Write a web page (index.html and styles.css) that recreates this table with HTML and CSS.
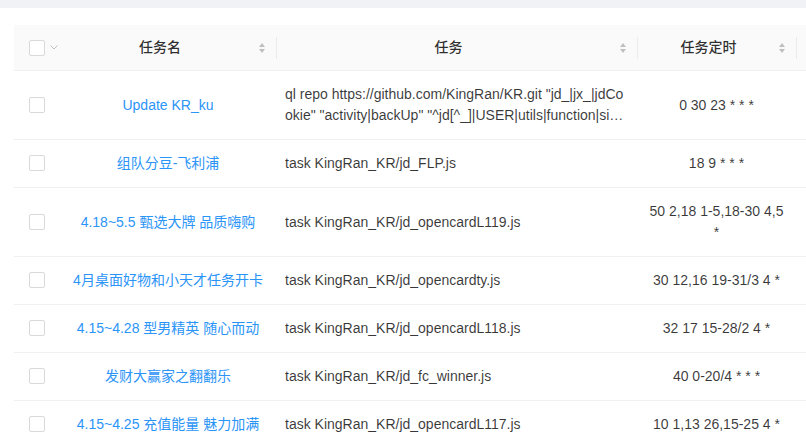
FILE: index.html
```html
<!DOCTYPE html>
<html lang="zh-CN">
<head>
<meta charset="utf-8">
<title>定时任务</title>
<link rel="stylesheet" href="styles.css">
</head>
<body>
<div class="topband"></div>
<div class="card">
  <table class="tbl">
    <colgroup>
      <col class="c-sel">
      <col class="c-name">
      <col class="c-cmd">
      <col class="c-sched">
      <col class="c-extra">
    </colgroup>
    <thead>
      <tr>
        <th class="sel">
          <div class="sel-head">
            <span class="cb"></span>
            <svg class="chev" width="8" height="5" viewBox="0 0 8 5"><path d="M0.5 0.5 L4 4 L7.5 0.5" fill="none" stroke="#bfbfbf" stroke-width="1"/></svg>
          </div>
        </th>
        <th><div class="th-in"><span class="th-title">任务名</span><span class="sorter"><i class="up"></i><i class="down"></i></span></div></th>
        <th><div class="th-in"><span class="th-title">任务</span><span class="sorter"><i class="up"></i><i class="down"></i></span></div></th>
        <th><div class="th-in"><span class="th-title">任务定时</span><span class="sorter"><i class="up"></i><i class="down"></i></span></div></th>
        <th><div class="th-in"><span class="th-title"></span></div></th>
      </tr>
    </thead>
    <tbody>
      <tr>
        <td class="sel"><span class="cb"></span></td>
        <td class="name"><a>Update KR_ku</a></td>
        <td class="cmd"><div class="clamp">ql repo https://github.com/KingRan/KR.git "jd_|jx_|jdCookie" "activity|backUp" "^jd[^_]|USER|utils|function|sign|sendNotify|ql|JDJR" "" "^jd[^_]|USER|utils|function|sign|sendNotify|ql|JDJR"</div></td>
        <td class="sched">0 30 23 * * *</td>
        <td class="extra"></td>
      </tr>
      <tr>
        <td class="sel"><span class="cb"></span></td>
        <td class="name"><a>组队分豆-飞利浦</a></td>
        <td class="cmd">task KingRan_KR/jd_FLP.js</td>
        <td class="sched">18 9 * * *</td>
        <td class="extra"></td>
      </tr>
      <tr>
        <td class="sel"><span class="cb"></span></td>
        <td class="name"><a>4.18~5.5 甄选大牌 品质嗨购</a></td>
        <td class="cmd">task KingRan_KR/jd_opencardL119.js</td>
        <td class="sched">50 2,18 1-5,18-30 4,5 *</td>
        <td class="extra"></td>
      </tr>
      <tr>
        <td class="sel"><span class="cb"></span></td>
        <td class="name"><a>4月桌面好物和小天才任务开卡</a></td>
        <td class="cmd">task KingRan_KR/jd_opencardty.js</td>
        <td class="sched">30 12,16 19-31/3 4 *</td>
        <td class="extra"></td>
      </tr>
      <tr>
        <td class="sel"><span class="cb"></span></td>
        <td class="name"><a>4.15~4.28 型男精英 随心而动</a></td>
        <td class="cmd">task KingRan_KR/jd_opencardL118.js</td>
        <td class="sched">32 17 15-28/2 4 *</td>
        <td class="extra"></td>
      </tr>
      <tr>
        <td class="sel"><span class="cb"></span></td>
        <td class="name"><a>发财大赢家之翻翻乐</a></td>
        <td class="cmd">task KingRan_KR/jd_fc_winner.js</td>
        <td class="sched">40 0-20/4 * * *</td>
        <td class="extra"></td>
      </tr>
      <tr>
        <td class="sel"><span class="cb"></span></td>
        <td class="name"><a>4.15~4.25 充值能量 魅力加满</a></td>
        <td class="cmd">task KingRan_KR/jd_opencardL117.js</td>
        <td class="sched">10 1,13 26,15-25 4 *</td>
        <td class="extra"></td>
      </tr>
    </tbody>
  </table>
</div>
</body>
</html>
```
FILE: styles.css
```css
html, body {
  margin: 0;
  padding: 0;
  background: #fff;
  overflow: hidden;
  width: 806px;
  height: 445px;
}
body {
  font-family: "Liberation Sans", "Noto Sans CJK SC", sans-serif;
  font-size: 14px;
  color: rgba(0, 0, 0, 0.78);
}
.topband {
  height: 8px;
  background: #f0f2f5;
}
.card {
  background: #fff;
  padding: 17px 0 0 14px;
}
.tbl {
  border-collapse: collapse;
  table-layout: fixed;
  width: 932px;
}
.c-sel { width: 46px; }
.c-name { width: 216px; }
.c-cmd { width: 361px; }
.c-sched { width: 159px; }
.c-extra { width: 150px; }

.tbl th {
  background: #fafafa;
  font-weight: 500;
  line-height: 21px;
  padding: 12px 8px;
  border-bottom: 1px solid #f0f0f0;
  position: relative;
  text-align: center;
  color: rgba(0, 0, 0, 0.82);
}
.tbl th + th::before {
  content: "";
  position: absolute;
  left: 0;
  top: 50%;
  width: 1px;
  height: 22px;
  transform: translateY(-50%);
  background: rgba(0, 0, 0, 0.06);
}
.tbl th.sel + th::before { display: none; }
.th-in {
  display: flex;
  align-items: center;
  min-height: 21px;
}
.th-title {
  flex: 1;
  text-align: center;
}
.sorter {
  width: 12px;
  margin-left: 4px;
  display: flex;
  flex-direction: column;
  align-items: center;
  gap: 2px;
}
.sorter i {
  display: block;
  width: 0;
  height: 0;
  border-left: 3.5px solid transparent;
  border-right: 3.5px solid transparent;
}
.sorter .up { border-bottom: 4px solid #bfbfbf; }
.sorter .down { border-top: 4px solid #bfbfbf; }

.tbl th.sel { padding: 12px 0; }
.sel-head {
  display: flex;
  align-items: center;
  padding-left: 15px;
  height: 21px;
  white-space: nowrap;
}
.chev {
  margin-left: 5px;
  display: block;
}
.cb {
  display: inline-block;
  box-sizing: border-box;
  width: 16px;
  height: 16px;
  border: 1px solid #d9d9d9;
  border-radius: 2px;
  background: #fff;
  vertical-align: middle;
}

.tbl td {
  line-height: 21px;
  padding: 13px 8px;
  border-bottom: 1px solid #f0f0f0;
  vertical-align: middle;
}
.tbl td.sel {
  text-align: center;
  padding: 13px 0;
}
.tbl td.sel .cb { vertical-align: -3px; }
.tbl td.name { text-align: center; }
.tbl td.name a {
  color: #2b94f7;
  text-decoration: none;
}
.tbl td.cmd {
  padding-left: 9px;
  padding-right: 10px;
}
.clamp {
  display: -webkit-box;
  -webkit-line-clamp: 2;
  -webkit-box-orient: vertical;
  overflow: hidden;
  word-break: break-all;
}
.tbl td.sched {
  text-align: center;
  padding-left: 10px;
  padding-right: 10px;
}
```
